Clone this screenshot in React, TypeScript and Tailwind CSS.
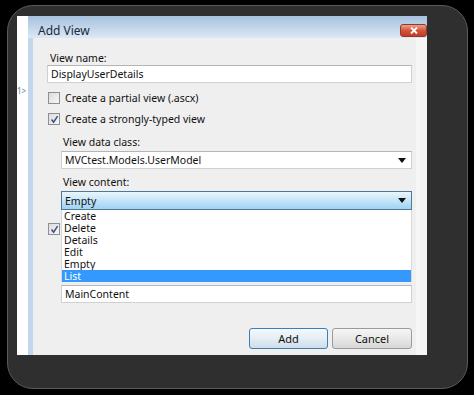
import React from "react"

function Arrow() {
  return (
    <svg width="8" height="5" viewBox="0 0 8 5" className="shrink-0">
      <path d="M0 0 L8 0 L4 5 Z" fill="#111" />
    </svg>
  )
}

function Check({ checked }: { checked?: boolean }) {
  return (
    <div className="flex h-[12px] w-[12px] shrink-0 items-center justify-center border border-[#8e8f8f] bg-gradient-to-br from-[#dcdcdc] to-[#f7f7f7]">
      {checked && (
        <svg width="9" height="9" viewBox="0 0 9 9">
          <path d="M1.5 4.5 L3.6 7.2 L7.6 1.2" stroke="#3b4f8a" strokeWidth="1.5" fill="none" />
        </svg>
      )}
    </div>
  )
}

function Field({ value, arrow, w }: { value?: string; arrow?: boolean; w: string }) {
  return (
    <div className={`flex h-[18px] items-center justify-between border border-[#d0d0d0] border-t-[#b5b5b5] bg-white pl-[3px] pr-[5px] ${w}`}>
      <span>{value}</span>
      {arrow && <Arrow />}
    </div>
  )
}

const items = ["Create", "Delete", "Details", "Edit", "Empty", "List"]

export default function App() {
  return (
    <div className="flex h-[395px] w-[474px] overflow-hidden bg-black pl-[7px] pt-[5px] font-['Noto_Sans','Open_Sans',sans-serif] text-[10.5px] leading-[14px] text-[#111]">
      <div className="flex h-[384px] w-[461px] shrink-0 rounded-[26px] border border-[#5a5a5a] bg-[#2f2f2f] pl-[9px] pt-[10px]">
        {/* editor strip behind the dialog */}
        <div className="h-[339px] w-[11px] shrink-0 bg-white pt-[70px] text-[8px] leading-[10px] text-[#5d7ea3]">
          1&gt;
        </div>

        {/* dialog */}
        <div className="flex h-[339px] w-[399px] shrink-0 flex-col">
          <div className="flex h-[22px] items-start justify-between bg-gradient-to-b from-[#a6c1de] to-[#dce8f4] pl-[10px] pt-[8px]">
            <span className="h-[13px] text-[12px] leading-[13px] text-[#1a2b3c]">Add View</span>
            <div className="flex h-[13px] w-[27px] items-center justify-center rounded-[3px] border border-[#8d3a2c] bg-gradient-to-b from-[#e9a190] via-[#d6533c] to-[#c53a24]">
              <svg width="8" height="7" viewBox="0 0 8 7">
                <path d="M1 0.5 L7 6.5 M7 0.5 L1 6.5" stroke="#fff" strokeWidth="1.8" />
              </svg>
            </div>
          </div>

          <div className="flex h-[317px]">
            <div className="w-[5px] bg-[#c3d7ec]" />
            <div className="flex w-[383px] flex-col bg-[#efefef] pl-[14px] pt-[13px]">
              <div className="h-[14px] pl-[3px]">View name:</div>
              <Field value="DisplayUserDetails" w="w-[365px]" />

              <div className="mt-[8px] flex h-[14px] items-center gap-[5px] pl-[1px]">
                <Check />
                <span>Create a partial view (.ascx)</span>
              </div>
              <div className="mt-[7px] flex h-[14px] items-center gap-[5px] pl-[1px]">
                <Check checked />
                <span>Create a strongly-typed view</span>
              </div>

              <div className="flex flex-col pl-[14px]">
                <div className="mt-[9px] h-[14px] pl-[2px]">View data class:</div>
                <div className="mt-[2px]">
                  <Field value="MVCtest.Models.UserModel" arrow w="w-[351px]" />
                </div>
                <div className="mt-[6px] h-[14px] pl-[2px]">View content:</div>
                <div className="relative mt-[2px] w-[351px]">
                  <div className="flex h-[19px] items-center justify-between border border-[#4f7897] bg-gradient-to-b from-[#eaf6fd] via-[#c4e5f8] to-[#9fd2f3] pl-[3px] pr-[5px]">
                    <span>Empty</span>
                    <Arrow />
                  </div>
                  <div className="absolute left-0 top-full z-10 flex h-[72px] w-[351px] flex-col border-x border-[#d8d8d8] bg-white">
                    {items.map((it) => (
                      <div
                        key={it}
                        className={`flex h-[12px] items-center pl-[2px] leading-[12px] ${it === "List" ? "bg-[#3399ff] text-white" : ""}`}
                      >
                        {it}
                      </div>
                    ))}
                  </div>
                </div>
              </div>

              {/* master page row, mostly covered by the open list */}
              <div className="mt-[12px] flex h-[14px] items-center pl-[1px]">
                <Check checked />
              </div>
              <div className="flex flex-col pl-[14px]">
                <div className="mt-[4px]">
                  <Field w="w-[351px]" />
                </div>
                <div className="mt-[8px] h-[14px]" />
                <div className="mt-[5px]">
                  <Field value="MainContent" w="w-[351px]" />
                </div>
              </div>

              <div className="mt-[25px] flex w-[365px] justify-end gap-[4px]">
                <button className="h-[21px] w-[79px] rounded-[3px] border border-[#3c7fb1] bg-gradient-to-b from-[#f4f9fc] via-[#e3eef5] to-[#cfdde8] text-[11px] text-[#111]">
                  Add
                </button>
                <button className="h-[21px] w-[80px] rounded-[3px] border border-[#9a9a9a] bg-gradient-to-b from-[#f6f6f6] via-[#e8e8e8] to-[#d6d6d6] text-[11px] text-[#111]">
                  Cancel
                </button>
              </div>
            </div>
            <div className="w-[11px] bg-[#f6f6f6]" />
          </div>
        </div>
      </div>
    </div>
  )
}
